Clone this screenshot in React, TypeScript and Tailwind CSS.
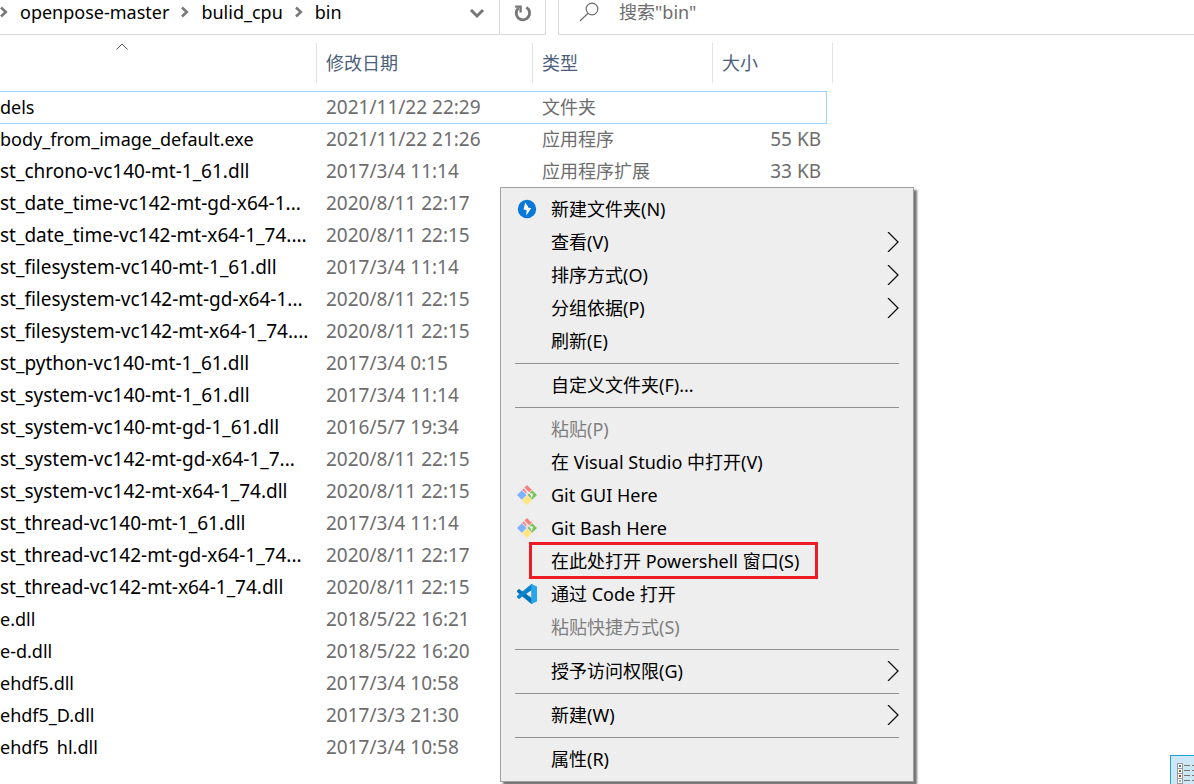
import React from 'react';
import clsx from 'clsx';

interface FileRow {
  name: string;
  date: string;
  type?: string;
  size?: string;
  selected?: boolean;
}

interface MenuEntry {
  label: string;
  icon?: React.ReactNode;
  submenu?: boolean;
  disabled?: boolean;
  marked?: boolean;
}

const FILES: FileRow[] = [
  { name: 'dels', date: '2021/11/22 22:29', type: '文件夹', selected: true },
  { name: 'body_from_image_default.exe', date: '2021/11/22 21:26', type: '应用程序', size: '55 KB' },
  { name: 'st_chrono-vc140-mt-1_61.dll', date: '2017/3/4 11:14', type: '应用程序扩展', size: '33 KB' },
  { name: 'st_date_time-vc142-mt-gd-x64-1...', date: '2020/8/11 22:17' },
  { name: 'st_date_time-vc142-mt-x64-1_74....', date: '2020/8/11 22:15' },
  { name: 'st_filesystem-vc140-mt-1_61.dll', date: '2017/3/4 11:14' },
  { name: 'st_filesystem-vc142-mt-gd-x64-1...', date: '2020/8/11 22:15' },
  { name: 'st_filesystem-vc142-mt-x64-1_74....', date: '2020/8/11 22:15' },
  { name: 'st_python-vc140-mt-1_61.dll', date: '2017/3/4 0:15' },
  { name: 'st_system-vc140-mt-1_61.dll', date: '2017/3/4 11:14' },
  { name: 'st_system-vc140-mt-gd-1_61.dll', date: '2016/5/7 19:34' },
  { name: 'st_system-vc142-mt-gd-x64-1_7...', date: '2020/8/11 22:15' },
  { name: 'st_system-vc142-mt-x64-1_74.dll', date: '2020/8/11 22:15' },
  { name: 'st_thread-vc140-mt-1_61.dll', date: '2017/3/4 11:14' },
  { name: 'st_thread-vc142-mt-gd-x64-1_74...', date: '2020/8/11 22:17' },
  { name: 'st_thread-vc142-mt-x64-1_74.dll', date: '2020/8/11 22:15' },
  { name: 'e.dll', date: '2018/5/22 16:21' },
  { name: 'e-d.dll', date: '2018/5/22 16:20' },
  { name: 'ehdf5.dll', date: '2017/3/4 10:58' },
  { name: 'ehdf5_D.dll', date: '2017/3/3 21:30' },
  { name: 'ehdf5_hl.dll', date: '2017/3/4 10:58' },
];

const BoltIcon = () => (
  <svg className="w-5 h-5" viewBox="0 0 20 20">
    <circle cx="10" cy="10" r="9.2" fill="#0a78d8" />
    <path d="M8.2 3.6 6.6 10.4l3 .6-.4 5.6 5-7.4-3.2-.6 0-1.2z" fill="#fff" />
  </svg>
);

const GitIcon = () => (
  <svg className="w-5 h-5" viewBox="0 0 20 20">
    <path d="M10 0 14.8 4.8 10 9.4 5.2 4.8z" fill="#f58080" />
    <path d="M15.2 5.2 20 10l-4.8 4.8L10.4 10z" fill="#7cc35c" />
    <path d="M4.8 5.2 9.6 10l-4.8 4.8L0 10z" fill="#80b3ff" />
    <path d="M10 10.6 14.8 15.2 10 20l-4.8-4.8z" fill="#ffe680" />
    <path d="M6.8 2.8 10 6v4M10 6l4.6 4.2v2.6" stroke="#eee" strokeWidth="1.3" fill="none" />
    <circle cx="14.6" cy="9.6" r="1.3" fill="#eee" />
  </svg>
);

const CodeIcon = () => (
  <svg className="w-5 h-5" viewBox="0 0 20 20">
    <path d="M.4 6.6 2 5.4 15 14.6V20L.4 8z" fill="#0071b8" stroke="#0071b8" strokeWidth=".8" />
    <path d="M.4 13.4 2 14.6 15 5.4V0L.4 12z" fill="#0a84cc" stroke="#0a84cc" strokeWidth=".8" />
    <path d="M14.2 0 20 2.4v15.2L14.2 20z" fill="#29a5ee" />
  </svg>
);

const MENU_GROUPS: MenuEntry[][] = [
  [
    { label: '新建文件夹(N)', icon: <BoltIcon /> },
    { label: '查看(V)', submenu: true },
    { label: '排序方式(O)', submenu: true },
    { label: '分组依据(P)', submenu: true },
    { label: '刷新(E)' },
  ],
  [{ label: '自定义文件夹(F)...' }],
  [
    { label: '粘贴(P)', disabled: true },
    { label: '在 Visual Studio 中打开(V)' },
    { label: 'Git GUI Here', icon: <GitIcon /> },
    { label: 'Git Bash Here', icon: <GitIcon /> },
    { label: '在此处打开 Powershell 窗口(S)', marked: true },
    { label: '通过 Code 打开', icon: <CodeIcon /> },
    { label: '粘贴快捷方式(S)', disabled: true },
  ],
  [{ label: '授予访问权限(G)', submenu: true }],
  [{ label: '新建(W)', submenu: true }],
  [{ label: '属性(R)' }],
];

const CrumbArrow = () => (
  <svg className="w-2 h-3 shrink-0" viewBox="0 0 8 12" fill="none" stroke="#7a7a7a" strokeWidth="2.6">
    <path d="M1 1.5 5.8 6 1 10.5" />
  </svg>
);

const AddressBar = () => (
  <div className="flex h-[35px] shrink-0 gap-3 leading-6 text-lg">
    <div className="flex w-[546px] border-b border-r border-[#d9d9d9]">
      <nav className="flex flex-1 items-center gap-3 pb-[10px] text-black">
        <CrumbArrow />
        <button type="button">openpose-master</button>
        <CrumbArrow />
        <button type="button">bulid_cpu</button>
        <CrumbArrow />
        <button type="button">bin</button>
      </nav>
      <button type="button" aria-label="历史记录" className="w-11 flex justify-center pt-2">
        <svg className="w-4 h-3" viewBox="0 0 16 12" fill="none" stroke="#767676" strokeWidth="3">
          <path d="M2 2 8 8 14 2" />
        </svg>
      </button>
      <button type="button" aria-label="刷新" className="w-[46px] flex justify-center border-l border-[#d9d9d9] pt-1">
        <svg className="w-5 h-5" viewBox="0 0 20 20" fill="none" stroke="#767676" strokeWidth="2.8">
          <path d="M5.6 4A6.7 6.7 0 1 0 13.4 3.4" />
          <path d="M2.2 2.6H7.6V8.4" strokeWidth="2.4" />
        </svg>
      </button>
    </div>
    <label className="flex flex-1 min-w-0 items-center gap-5 border-b border-l border-[#d9d9d9] pl-5 pb-[10px]">
      <svg className="w-5 h-5 shrink-0" viewBox="0 0 20 20" fill="none" stroke="#6d6d6d" strokeWidth="1.2">
        <circle cx="13" cy="7" r="5.8" />
        <path d="M9 11.2 1 19" />
      </svg>
      <input
        type="text"
        aria-label="搜索"
        placeholder={'搜索"bin"'}
        className="w-full min-w-0 outline-none placeholder:text-[#6d6d6d]"
      />
    </label>
  </div>
);

const HeaderLine = () => <span className="h-10 w-px shrink-0 bg-[#e2e2e2]" />;

const FileTable = () => (
  <table className="w-[833px] table-fixed border-collapse text-left">
    <colgroup>
      <col className="w-[317px]" />
      <col className="w-[216px]" />
      <col className="w-[180px]" />
      <col className="w-[120px]" />
    </colgroup>
    <thead>
      <tr className="h-14 text-lg text-[#4c607a]">
        <th className="p-0 font-normal" aria-label="名称">
          <div className="flex h-10">
            <span className="flex flex-1 justify-center pr-[72px]">
              <svg className="w-3 h-2" viewBox="0 0 12 8" fill="none" stroke="#5a5a5a">
                <path d="M.5 6.5 6 1l5.5 5.5" />
              </svg>
            </span>
            <HeaderLine />
          </div>
        </th>
        {['修改日期', '类型', '大小'].map((title) => (
          <th key={title} className="p-0 font-normal">
            <div className="flex h-10 items-center justify-between pl-[9px]">
              {title}
              <HeaderLine />
            </div>
          </th>
        ))}
      </tr>
    </thead>
    <tbody>
      {FILES.map((file) => (
        <tr key={file.name} className="relative h-8 whitespace-nowrap text-[19px] leading-6 text-[#6d6d6d]">
          <td className={clsx('p-0 text-black', !file.name.startsWith('st_') && 'text-lg leading-6')}>
            {file.name}
            {file.selected && (
              <span className="absolute top-0 -bottom-px left-0 right-[6px] border border-l-0 border-[#99d1ff]" />
            )}
          </td>
          <td className="p-0 pl-[9px]">{file.date}</td>
          <td className="p-0 pl-[9px] text-lg">{file.type}</td>
          <td className="p-0 pr-3 text-right">{file.size}</td>
        </tr>
      ))}
    </tbody>
  </table>
);

const MenuItem: React.FC<{ entry: MenuEntry }> = ({ entry }) => (
  <button
    type="button"
    role="menuitem"
    disabled={entry.disabled}
    className="relative flex h-[33px] w-full items-center pl-4 pr-[14px] text-left text-black disabled:text-[#7f7f7f]"
  >
    <span className="w-5 shrink-0">{entry.icon}</span>
    <span className="ml-[14px] flex-1 whitespace-nowrap">{entry.label}</span>
    {entry.submenu && (
      <svg className="w-3 h-5" viewBox="0 0 12 20" fill="none" stroke="#111" strokeWidth="1.3">
        <path d="M1 0 11 10 1 20" />
      </svg>
    )}
    {entry.marked && (
      <span className="absolute -top-0.5 left-7 h-[37px] w-[289px] border-3 border-[#ed1c24]" />
    )}
  </button>
);

const ContextMenu = () => (
  <div
    role="menu"
    className="absolute left-[500px] top-[187px] w-[414px] border border-[#a0a0a0] bg-[#eeeeee] pt-1 pb-1.5 text-lg leading-6 shadow-[3px_3px_2px_0_rgba(0,0,0,0.55)]"
  >
    {MENU_GROUPS.map((group, index) => (
      <React.Fragment key={group[0].label}>
        {index > 0 && <hr className="mx-[14px] mt-1.5 mb-1 border-[#919191]" />}
        {group.map((entry) => (
          <MenuItem key={entry.label} entry={entry} />
        ))}
      </React.Fragment>
    ))}
  </div>
);

const StatusBar = () => (
  <div className="flex h-[29px] shrink-0 justify-end overflow-hidden">
    <button
      type="button"
      aria-label="详细信息"
      className="w-6 border-l border-t border-[#26a0da] bg-[#cce8f6] pl-[6px] pt-[7px]"
    >
      <svg className="h-[21px] w-[17px]" viewBox="0 0 17 21">
        {['#3a7a9c', '#6a7a3a', '#b03a20', '#8fb0a0'].map((color, i) => (
          <g key={color} transform={`translate(0 ${i * 5})`}>
            <rect x=".5" y=".5" width="5" height="5" fill="#fff" stroke="#999" />
            <rect x="2" y="2" width="2" height="2" fill={color} />
            <path d="M7 2.5h6M15 2.5h2" stroke="#777" />
          </g>
        ))}
      </svg>
    </button>
  </div>
);

export default function App() {
  return (
    <div className="relative flex h-screen flex-col overflow-hidden bg-white font-['Noto_Sans','Noto_Sans_CJK_SC',sans-serif]">
      <AddressBar />
      <main className="min-h-0 flex-1 overflow-hidden">
        <FileTable />
      </main>
      <StatusBar />
      <ContextMenu />
    </div>
  );
}
